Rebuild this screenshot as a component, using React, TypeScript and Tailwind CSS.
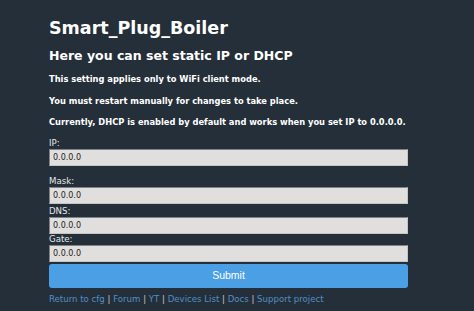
const fields = [
  { label: 'IP:', value: '0.0.0.0', gap: 'mt-[11px]' },
  { label: 'Mask:', value: '0.0.0.0', gap: 'mt-[10px]' },
  { label: 'DNS:', value: '0.0.0.0', gap: 'mt-[2px]' },
  { label: 'Gate:', value: '0.0.0.0', gap: 'mt-0' },
]

const links = ['Return to cfg', 'Forum', 'YT', 'Devices List', 'Docs', 'Support project']

export default function App() {
  return (
    <div className="w-[474px] h-[311px] overflow-hidden bg-[#252f39] text-white font-['DejaVu_Sans',Verdana,sans-serif]">
      <div className="w-[359px] ml-[49px] pt-[17px]">
        <h1 className="text-[17.5px] font-bold leading-[22px]">Smart_Plug_Boiler</h1>
        <h2 className="mt-[9px] text-[12.5px] font-bold leading-[15px]">Here you can set static IP or DHCP</h2>
        <p className="mt-[11px] text-[8.3px] font-bold leading-[10px] whitespace-nowrap">This setting applies only to WiFi client mode.</p>
        <p className="mt-[12px] text-[8.3px] font-bold leading-[10px] whitespace-nowrap">You must restart manually for changes to take place.</p>
        <p className="mt-[11px] text-[8.3px] font-bold leading-[10px] whitespace-nowrap">
          Currently, DHCP is enabled by default and works when you set IP to 0.0.0.0.
        </p>

        <form onSubmit={e => e.preventDefault()}>
          {fields.map(f => (
            <div key={f.label} className={f.gap}>
              <label className="block text-[8.6px] leading-[10px] text-[#e6e8ea]">{f.label}</label>
              <input
                defaultValue={f.value}
                className="block mt-[1px] w-full h-[17px] px-[3px] bg-[#e1dfde] text-[#222] text-[8px] border border-t-[#7d838a] border-l-[#7d838a] border-r-[#c4c4c4] border-b-[#c4c4c4] outline-none"
              />
            </div>
          ))}
          <button
            type="submit"
            className="mt-[2px] block w-full h-[24px] rounded-[3px] bg-[#4b9fe5] text-white text-[10.5px] font-['Liberation_Sans',Arial,sans-serif]"
          >
            Submit
          </button>
        </form>

        <div className="mt-[6px] text-[8.6px] leading-[10px] text-[#4e8fc8] whitespace-nowrap">
          {links.map((l, i) => (
            <span key={l}>
              {i > 0 && <span className="text-[#c8ccd0]"> | </span>}
              <a href="#">{l}</a>
            </span>
          ))}
        </div>
      </div>
    </div>
  )
}
